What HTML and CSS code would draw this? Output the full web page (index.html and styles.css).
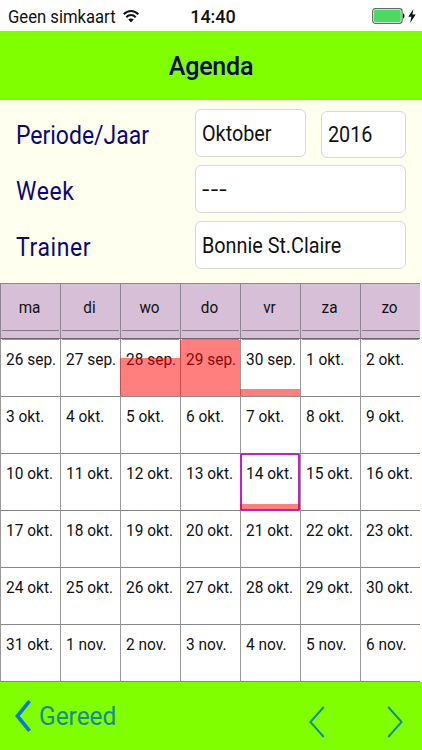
FILE: index.html
```
<!DOCTYPE html>
<html lang="nl">
<head>
    <meta charset="UTF-8">
    <meta name="viewport" content="width=device-width, initial-scale=1.0">
    <title>Agenda</title>
    <link rel="stylesheet" href="styles.css">
</head>
<body>
    <div class="status-bar">
        <div class="status-left">
            <span class="carrier">Geen simkaart</span>
            <svg class="wifi" width="16" height="14" viewBox="0 0 16 14" fill="none" stroke="#111" stroke-width="2">
                <path d="M0.7 5.2C4.8 0.8 11.2 0.8 15.3 5.2"/>
                <path d="M3.3 8.2C6 5.4 10 5.4 12.7 8.2"/>
                <path d="M8 13.6L5.2 10.6C6.8 9.2 9.2 9.2 10.8 10.6Z" fill="#111" stroke="none"/>
            </svg>
        </div>
        <span class="clock">14:40</span>
        <div class="status-right">
            <svg width="34" height="16" viewBox="0 0 34 16">
                <rect x="0.7" y="0.7" width="29.4" height="14.6" rx="2.5" fill="#fff" stroke="#666" stroke-width="1.2"/>
                <rect x="2" y="2" width="26.8" height="12" rx="1" fill="#4cd964"/>
                <path d="M31 5.6C33 6 33 10 31 10.4Z" fill="#111"/>
            </svg>
            <svg width="8" height="14" viewBox="0 0 8 14">
                <path d="M5.4 0L0.3 7.8H3.4L2.1 14L7.7 5.6H4.4Z" fill="#111"/>
            </svg>
        </div>
    </div>

    <header>
        <h1>Agenda</h1>
    </header>

    <div class="filters">
        <div class="filter-row">
            <span class="filter-label">Periode/Jaar</span>
            <div class="field field-month"><span>Oktober</span></div>
            <div class="field field-year"><span>2016</span></div>
        </div>
        <div class="filter-row">
            <span class="filter-label label-wide">Week</span>
            <div class="field field-week"><span>---</span></div>
        </div>
        <div class="filter-row">
            <span class="filter-label label-wide">Trainer</span>
            <div class="field"><span>Bonnie St.Claire</span></div>
        </div>
    </div>

    <div class="calendar">
        <div class="weekdays">
            <div class="weekday"><span>ma</span></div>
            <div class="weekday"><span>di</span></div>
            <div class="weekday"><span>wo</span></div>
            <div class="weekday"><span>do</span></div>
            <div class="weekday"><span>vr</span></div>
            <div class="weekday"><span>za</span></div>
            <div class="weekday"><span>zo</span></div>
        </div>
        <div class="days">
            <div class="day"><span>26 sep.</span></div>
            <div class="day"><span>27 sep.</span></div>
            <div class="day"><span>28 sep.</span><div class="load" style="height: 67%"></div></div>
            <div class="day"><span>29 sep.</span><div class="load" style="height: 100%"></div></div>
            <div class="day"><span>30 sep.</span><div class="load" style="height: 13%"></div></div>
            <div class="day"><span>1 okt.</span></div>
            <div class="day"><span>2 okt.</span></div>

            <div class="day"><span>3 okt.</span></div>
            <div class="day"><span>4 okt.</span></div>
            <div class="day"><span>5 okt.</span></div>
            <div class="day"><span>6 okt.</span></div>
            <div class="day"><span>7 okt.</span></div>
            <div class="day"><span>8 okt.</span></div>
            <div class="day"><span>9 okt.</span></div>

            <div class="day"><span>10 okt.</span></div>
            <div class="day"><span>11 okt.</span></div>
            <div class="day"><span>12 okt.</span></div>
            <div class="day"><span>13 okt.</span></div>
            <div class="day today"><span>14 okt.</span><div class="load" style="height: 10%"></div></div>
            <div class="day"><span>15 okt.</span></div>
            <div class="day"><span>16 okt.</span></div>

            <div class="day"><span>17 okt.</span></div>
            <div class="day"><span>18 okt.</span></div>
            <div class="day"><span>19 okt.</span></div>
            <div class="day"><span>20 okt.</span></div>
            <div class="day"><span>21 okt.</span></div>
            <div class="day"><span>22 okt.</span></div>
            <div class="day"><span>23 okt.</span></div>

            <div class="day"><span>24 okt.</span></div>
            <div class="day"><span>25 okt.</span></div>
            <div class="day"><span>26 okt.</span></div>
            <div class="day"><span>27 okt.</span></div>
            <div class="day"><span>28 okt.</span></div>
            <div class="day"><span>29 okt.</span></div>
            <div class="day"><span>30 okt.</span></div>

            <div class="day"><span>31 okt.</span></div>
            <div class="day"><span>1 nov.</span></div>
            <div class="day"><span>2 nov.</span></div>
            <div class="day"><span>3 nov.</span></div>
            <div class="day"><span>4 nov.</span></div>
            <div class="day"><span>5 nov.</span></div>
            <div class="day"><span>6 nov.</span></div>
        </div>
    </div>

    <footer>
        <button class="back-button">
            <svg width="16" height="32" viewBox="0 0 16 32" fill="none" stroke="#0a7ad6" stroke-width="3.6">
                <path d="M14.5 1.2L2.4 16L14.5 30.8"/>
            </svg>
            <span>Gereed</span>
        </button>
        <div class="pager">
            <button class="page-button">
                <svg width="16" height="32" viewBox="0 0 16 32" fill="none" stroke="#0f8c9c" stroke-width="1.9">
                    <path d="M14.8 1L1.4 16L14.8 31"/>
                </svg>
            </button>
            <button class="page-button">
                <svg width="16" height="32" viewBox="0 0 16 32" fill="none" stroke="#0f8c9c" stroke-width="1.9">
                    <path d="M1.2 1L14.6 16L1.2 31"/>
                </svg>
            </button>
        </div>
    </footer>
</body>
</html>
```

FILE: styles.css
```
* {
    margin: 0;
    padding: 0;
    box-sizing: border-box;
}

body {
    width: 422px;
    height: 750px;
    overflow: hidden;
    display: flex;
    flex-direction: column;
    font-family: Roboto, "Liberation Sans", sans-serif;
    background-color: #fffff0;
    color: #111;
}

/* Status bar */
.status-bar {
    height: 31px;
    padding: 1px 6px 0 8px;
    display: grid;
    grid-template-columns: 1fr auto 1fr;
    align-items: center;
    background: white;
    font-size: 18px;
}

.status-left,
.status-right {
    display: flex;
    align-items: center;
}

.status-right {
    justify-content: flex-end;
    gap: 2px;
}

.carrier {
    width: 115px;
    white-space: nowrap;
    transform: scaleX(0.925);
    transform-origin: left;
}

.clock {
    font-weight: 500;
    position: relative;
    left: 1px;
}

header {
    height: 69px;
    padding-top: 2px;
    display: flex;
    align-items: center;
    justify-content: center;
    background: #80ff00;
}

h1 {
    font-size: 25px;
    font-weight: 500;
    line-height: 30px;
    letter-spacing: -0.2px;
    color: #000a50;
}

/* Filters */
.filters {
    height: 183px;
    padding: 9px 16px 0;
    display: flex;
    flex-direction: column;
    gap: 9px;
}

.filter-row {
    display: flex;
    height: 47px;
}

.filter-label {
    width: 179px;
    line-height: 53px;
    font-size: 25.5px;
    color: #0c0870;
    transform: scaleX(0.9);
    transform-origin: left;
}

.label-wide {
    letter-spacing: 0.7px;
}

.field {
    flex: 1;
    height: 48px;
    padding-left: 6px;
    line-height: 47px;
    background: white;
    border: 1px solid #d8d8d8;
    border-radius: 6px;
    font-size: 21.5px;
}

.field span {
    display: inline-block;
    transform: scaleX(0.92);
    transform-origin: left;
}

.field-month {
    flex: 0 0 111px;
    margin-right: 15px;
}

.field-year {
    height: 47px;
    margin-top: 2px;
    line-height: 46px;
}

.field-week span {
    letter-spacing: 1px;
    transform: scaleX(1.25);
}

/* Calendar */
.calendar {
    width: 420px;
    height: 399px;
    background: white;
}

.weekdays {
    height: 56px;
    display: grid;
    grid-template-columns: repeat(7, 60px);
    background: #d8bfd8;
    border-top: 1px solid #8c8590;
    border-bottom: 1px solid #6e6673;
}

.weekday {
    display: flex;
    flex-direction: column;
    border-left: 1px solid #8e8592;
    text-align: center;
    font-size: 17px;
    line-height: 46px;
}

.weekday span {
    transform: translateX(-1px) scaleX(0.9);
}

.weekday::after {
    content: "";
    height: 8px;
    margin: 0 1px;
    border-top: 1px solid #85798a;
    border-bottom: 1px solid #9c8fa0;
}

.days {
    display: grid;
    grid-template-columns: repeat(7, 60px);
    grid-auto-rows: 57px;
    padding-top: 1px;
}

.day {
    position: relative;
    padding: 8px 0 0 4.5px;
    border-left: 1px solid #999;
    border-bottom: 1px solid #888;
    font-size: 17px;
    line-height: 22px;
    white-space: nowrap;
}

.day span {
    display: inline-block;
    transform: scaleX(0.91);
    transform-origin: left;
}

.load {
    position: absolute;
    left: -1px;
    right: 0;
    bottom: 0;
    background: rgba(255, 0, 0, 0.5);
}

.today {
    z-index: 1;
}

.today::before {
    content: "";
    position: absolute;
    inset: -1px 0 -1px -1px;
    border: 2px solid #c020c8;
    border-radius: 2px;
}

/* Bottom toolbar */
footer {
    flex: 1;
    padding: 0 19px 0 15px;
    display: flex;
    justify-content: space-between;
    background: #80ff00;
}

footer button {
    display: flex;
    background: none;
    border: none;
    cursor: pointer;
}

.back-button {
    align-items: center;
    align-self: flex-start;
    gap: 8px;
    margin-top: 18px;
    font-family: inherit;
    font-size: 26px;
    line-height: 32px;
    color: #168c94;
}

.back-button span {
    transform: scaleX(0.94);
    transform-origin: left;
}

.pager {
    display: flex;
    gap: 62px;
    margin-top: 24px;
}
```
